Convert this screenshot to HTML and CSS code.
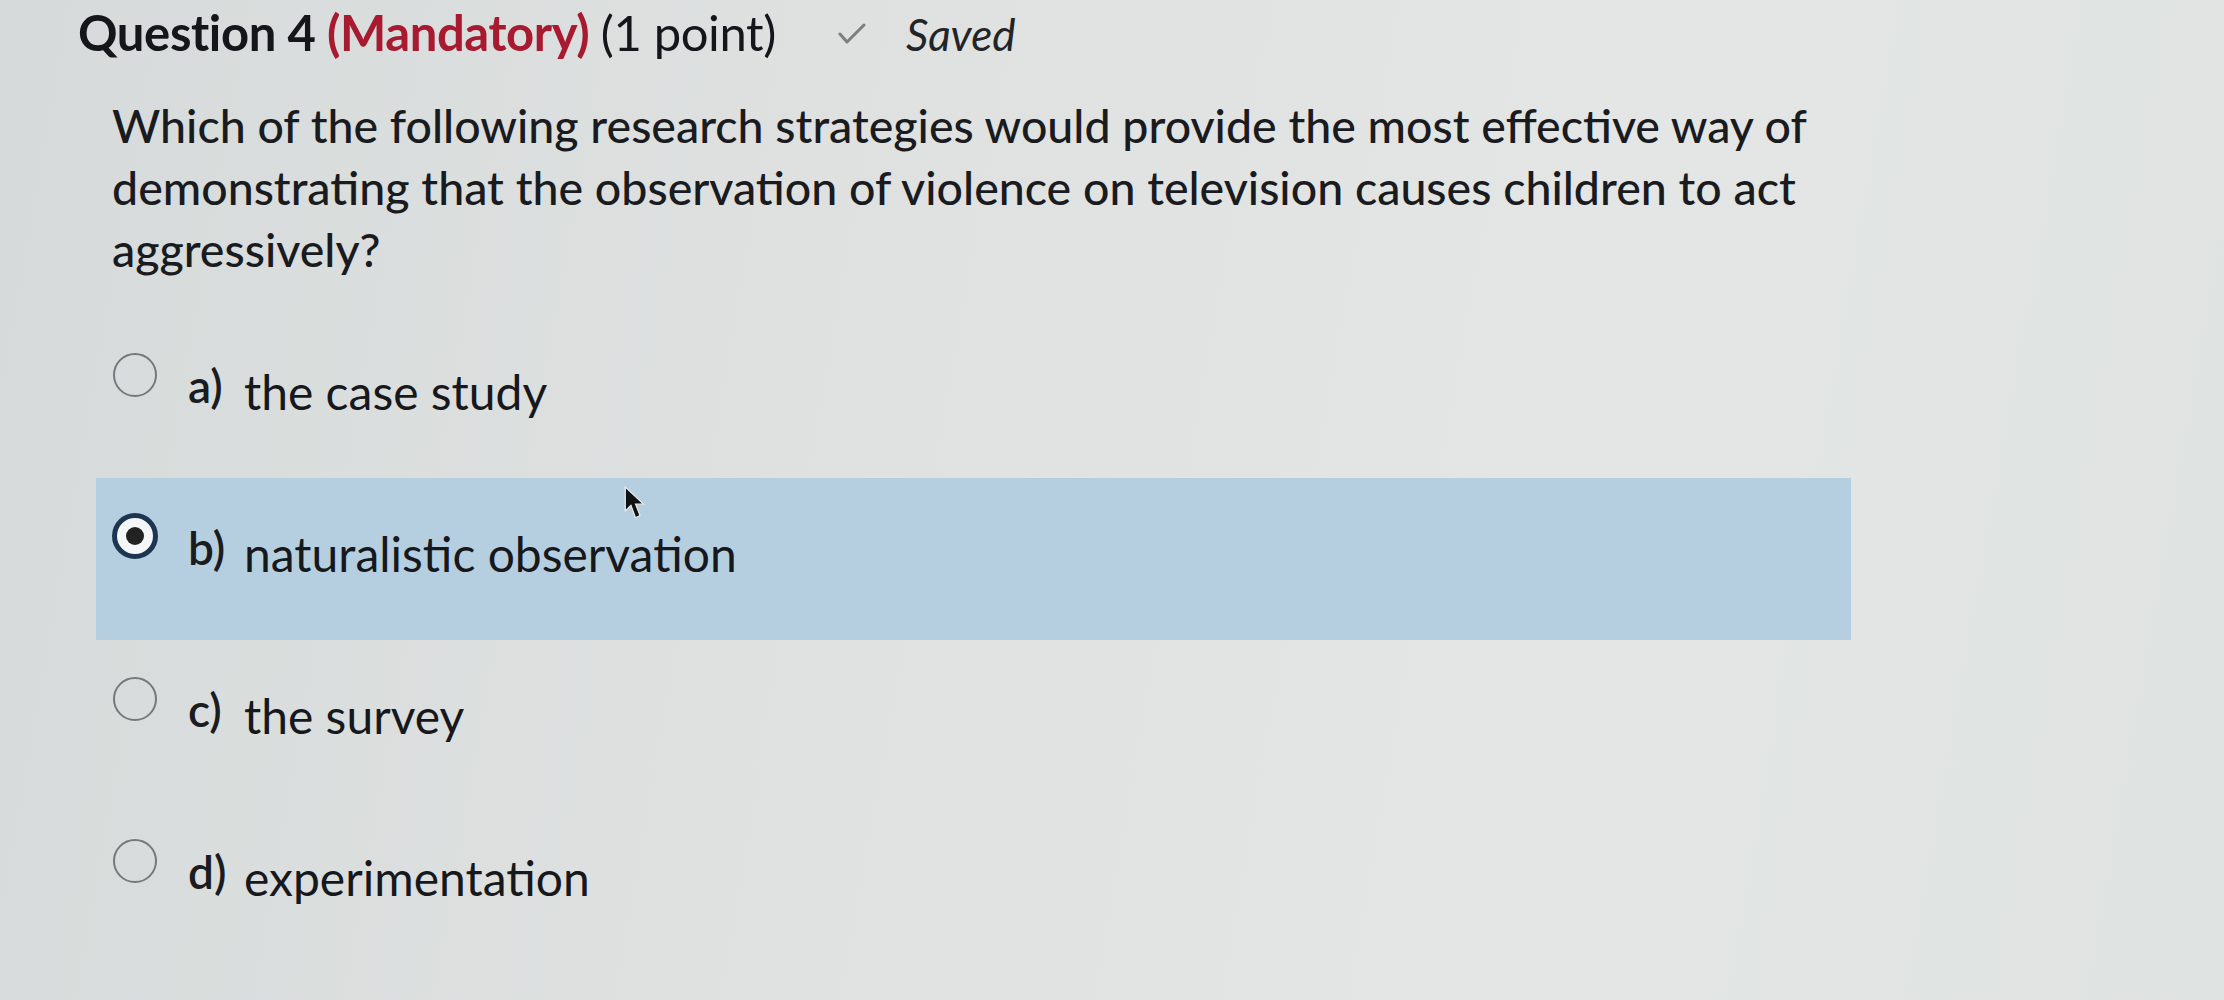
FILE: index.html
```html
<!DOCTYPE html>
<html lang="en">
<head>
<meta charset="utf-8">
<title>Question 4</title>
<link rel="stylesheet" href="styles.css">
</head>
<body>
<main class="quiz">
  <header class="q-head">
    <h2 class="q-title"><span class="q-num">Question 4</span> <span class="q-mand">(Mandatory)</span> <span class="q-pts">(1 point)</span></h2>
    <span class="saved">
      <svg class="check" viewBox="0 0 28 22" width="28" height="22" aria-hidden="true"><polyline points="2,11 9,19 26,2" fill="none" stroke="#7b7f82" stroke-width="3" stroke-linecap="round" stroke-linejoin="round"/></svg>
      <span class="saved-text">Saved</span>
    </span>
  </header>
  <p class="q-text">Which of the following research strategies would provide the most effective way of demonstrating that the observation of violence on television causes children to act aggressively?</p>
  <ul class="options">
    <li class="option"><span class="radio"></span><span class="opt-label">a)</span><span class="opt-text">the case study</span></li>
    <li class="option selected"><span class="radio"><span class="dot"></span></span><span class="opt-label">b)</span><span class="opt-text">naturalistic observation</span>
      <svg class="cursor" viewBox="0 0 20 30" width="23" height="34" aria-hidden="true"><polygon points="1,1 1,22 6,17 10,28 14,26 10,16 17,16" fill="#111" stroke="#eee" stroke-width="1"/></svg>
    </li>
    <li class="option"><span class="radio"></span><span class="opt-label">c)</span><span class="opt-text">the survey</span></li>
    <li class="option"><span class="radio"></span><span class="opt-label">d)</span><span class="opt-text">experimentation</span></li>
  </ul>
</main>
</body>
</html>
```
FILE: styles.css
```css
html, body {
  margin: 0;
  padding: 0;
}
body {
  width: 2224px;
  height: 1000px;
  overflow: hidden;
  font-family: Lato, "Open Sans", "Liberation Sans", sans-serif;
  color: #1b1c1f;
  background: linear-gradient(100deg, #d6dada 0%, #dee1e0 35%, #e3e6e4 70%, #dfe3e2 100%);
}
.quiz {
  padding-top: 3px;
}
.q-head {
  display: flex;
  align-items: baseline;
  margin-left: 78px;
  height: 59px;
}
.q-title {
  margin: 0;
  font-size: 49px;
  line-height: 1.2;
  font-weight: 700;
  letter-spacing: -0.4px;
}
.q-num { color: #15161a; }
.q-mand { color: #a81a30; }
.q-pts { font-weight: 400; color: #15161a; }
.saved {
  display: inline-flex;
  align-items: baseline;
  margin-left: 62px;
}
.check {
  align-self: center;
  margin-right: 40px;
}
.saved-text {
  font-style: italic;
  font-size: 44px;
  line-height: 1.2;
  color: #222428;
}
.q-text {
  margin: 32px 0 0 112px;
  width: 1720px;
  font-size: 46.5px;
  line-height: 62px;
  font-weight: 500;
  color: #1a1b1f;
}
.options {
  list-style: none;
  margin: 36px 0 0 96px;
  padding: 0;
  width: 1755px;
}
.option {
  position: relative;
  display: flex;
  align-items: flex-start;
  height: 162px;
  padding-left: 17px;
  box-sizing: border-box;
}
.option.selected {
  background: #b5cfe1;
}
.radio {
  flex: none;
  width: 44px;
  height: 44px;
  margin-top: 37px;
  border: 2px solid #76797b;
  border-radius: 50%;
  box-sizing: border-box;
  background: #d8dcdc;
  display: flex;
  align-items: center;
  justify-content: center;
}
.selected .radio {
  width: 46px;
  height: 46px;
  margin-top: 35px;
  margin-left: -1px;
  margin-right: -1px;
  border: 5px solid #1c3552;
  background: #f4f6f7;
}
.dot {
  width: 18px;
  height: 18px;
  border-radius: 50%;
  background: #222;
}
.opt-label {
  flex: none;
  width: 56px;
  margin-left: 31px;
  margin-top: 42px;
  font-size: 46px;
  line-height: 55px;
  font-weight: 600;
  color: #1b1c1f;
}
.opt-text {
  margin-top: 47px;
  font-size: 48px;
  line-height: 58px;
  color: #17181c;
}
.cursor {
  position: absolute;
  left: 528px;
  top: 8px;
}
```
